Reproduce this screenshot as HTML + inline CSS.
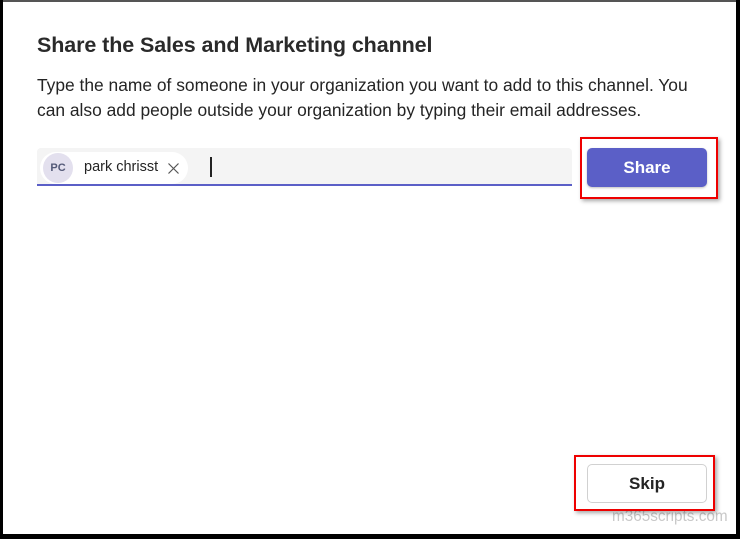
<!DOCTYPE html>
<html><head><style>
body{margin:0;width:740px;height:539px;background:#fff;position:relative;overflow:hidden;font-family:"Segoe UI","Liberation Sans",sans-serif;color:#242424}
.a{position:absolute}
</style></head><body>
<div class="a" style="left:0;top:0;width:740px;height:2px;background:#555"></div>
<div class="a" style="left:0;top:0;width:3px;height:539px;background:#000"></div>
<div class="a" style="left:736px;top:0;width:4px;height:539px;background:#000"></div>
<div class="a" style="left:0;top:534px;width:740px;height:5px;background:#000"></div>
<div class="a" style="left:37px;top:33px;font-size:21.5px;font-weight:bold;white-space:nowrap;letter-spacing:-0.1px;color:#2a2a2a">Share the Sales and Marketing channel</div>
<div class="a" style="left:37px;top:73px;font-size:17.4px;line-height:24.5px;width:700px;white-space:nowrap">Type the name of someone in your organization you want to add to this channel. You<br>can also add people outside your organization by typing their email addresses.</div>
<div class="a" style="left:37px;top:148px;width:535px;height:36px;background:#f4f4f4;border-bottom:2px solid #5b5fc7;border-radius:4px 4px 0 0"></div>
<div class="a" style="left:40px;top:152px;width:148px;height:32px;background:#fff;border-radius:16px"></div>
<div class="a" style="left:43px;top:153px;width:30px;height:30px;border-radius:50%;background:#e3e0ee;color:#545a78;font-size:11px;font-weight:bold;text-align:center;line-height:30px">PC</div>
<div class="a" style="left:84px;top:159px;font-size:14.5px;color:#242424">park chrisst</div>
<svg class="a" style="left:167px;top:162px" width="13" height="13"><path d="M1.5 1.5L11.5 11.5M11.5 1.5L1.5 11.5" stroke="#555" stroke-width="1.2"/></svg>
<div class="a" style="left:210px;top:157px;width:1.5px;height:20px;background:#222"></div>
<div class="a" style="left:612px;top:508px;font-size:15.3px;color:#c8c8c8;font-family:'Liberation Sans',sans-serif">m365scripts.com</div>
<div class="a" style="left:580px;top:137px;width:134px;height:58px;border:2px solid #e00;box-shadow:2px 2px 4px rgba(0,0,0,.35)"></div>
<div class="a" style="left:587px;top:148px;width:120px;height:39px;background:#5b5fc7;border-radius:5px;color:#fff;font-size:17px;font-weight:bold;text-align:center;line-height:39px;box-shadow:0 1px 2px rgba(0,0,0,.25)">Share</div>
<div class="a" style="left:574px;top:455px;width:137px;height:52px;border:2px solid #e00;background:transparent;box-shadow:2px 2px 4px rgba(0,0,0,.35)"></div>
<div class="a" style="left:587px;top:464px;width:118px;height:37px;background:#fff;border:1px solid #d1d1d1;border-radius:5px;font-size:17px;font-weight:bold;text-align:center;line-height:37px">Skip</div>
</body></html>
